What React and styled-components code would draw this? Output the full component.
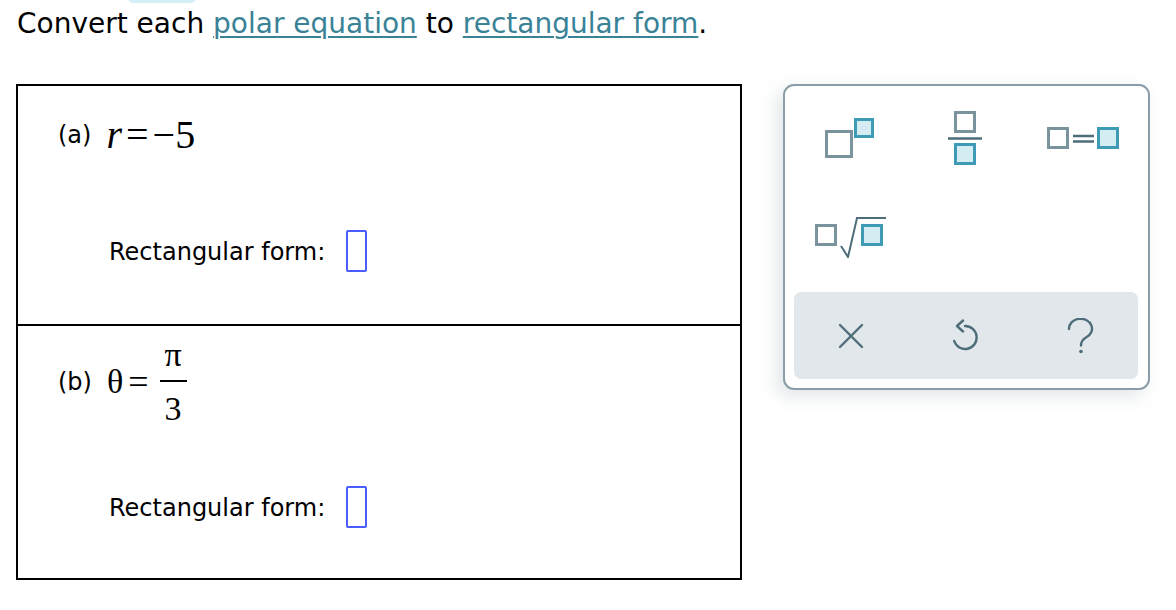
import React from "react";
import styled, { createGlobalStyle } from "styled-components";

const GlobalStyle = createGlobalStyle`
  html, body {
    margin: 0;
    padding: 0;
    background: #ffffff;
  }
  body {
    font-family: "DejaVu Sans", Verdana, sans-serif;
    color: #000000;
  }
`;

const Page = styled.div`
  position: relative;
  width: 1176px;
  height: 610px;
  padding: 6px 0 0 16px;
  box-sizing: border-box;
  overflow: hidden;
`;

const TooltipTail = styled.div`
  position: absolute;
  top: -8px;
  left: 128px;
  width: 68px;
  height: 11px;
  border-radius: 6px;
  background: #d6eef5;
`;

const Title = styled.p`
  margin: 0 0 0 1px;
  font-size: 28px;
  line-height: 36px;
`;

const TermLink = styled.a`
  color: #3a8397;
  text-decoration: underline;
  text-underline-offset: 3px;
  text-decoration-thickness: 2px;
`;

const Content = styled.div`
  display: flex;
  align-items: flex-start;
  gap: 41px;
  margin-top: 42px;
`;

const QuestionTable = styled.div`
  width: 726px;
  border: 2px solid #000000;
  box-sizing: border-box;
`;

const Row = styled.div`
  padding: ${(props) => props.padding || "30px 0 52px 40px"};
  & + & {
    border-top: 2px solid #000000;
  }
`;

const Prompt = styled.div`
  display: flex;
  align-items: center;
  height: ${(props) => props.height || "38px"};
`;

const Label = styled.span`
  font-size: 24px;
  margin-right: 15px;
`;

const MathText = styled.span`
  font-family: "Liberation Serif", "Times New Roman", serif;
  font-size: ${(props) => props.size || "40px"};
  font-style: ${(props) => (props.italic ? "italic" : "normal")};
  line-height: 1;
`;

const Rel = styled.span`
  font-family: "Liberation Serif", "Times New Roman", serif;
  font-size: ${(props) => props.size || "40px"};
  line-height: 1;
  margin: 0 ${(props) => props.space || "4px"};
`;

const Fraction = styled.span`
  display: inline-flex;
  flex-direction: column;
  align-items: center;
  font-family: "Liberation Serif", "Times New Roman", serif;
  font-size: 34px;
  line-height: 1;
  margin-left: 6px;
`;

const FracBar = styled.span`
  width: 27px;
  height: 2px;
  margin: 8px 0 10px;
  background: #000000;
`;

const Answer = styled.div`
  display: flex;
  align-items: center;
  gap: 21px;
  margin-top: ${(props) => props.gap || "76px"};
  padding-left: 51px;
  height: 42px;
`;

const AnswerLabel = styled.span`
  font-size: 24px;
  padding-top: 2px;
`;

const AnswerBox = styled.span`
  display: inline-block;
  width: 21px;
  height: 42px;
  border: 2px solid #4b5dff;
  border-radius: 2px;
  box-sizing: border-box;
`;

const Keypad = styled.div`
  width: 367px;
  border: 2px solid #8a9ea7;
  border-radius: 11px;
  box-sizing: border-box;
  padding: 4px 10px 9px 9px;
  box-shadow: -6px 6px 18px rgba(120, 140, 150, 0.22);
  background: #ffffff;
`;

const KeyGrid = styled.div`
  display: grid;
  grid-template-columns: repeat(3, 1fr);
  grid-auto-rows: 98px;
`;

const Key = styled.button`
  display: flex;
  align-items: center;
  justify-content: center;
  border: none;
  background: transparent;
  padding: 0;
  margin: 0;
  cursor: pointer;
  transform: translateX(${(props) => props.shift || "0px"});
`;

const ActionBar = styled.div`
  display: grid;
  grid-template-columns: repeat(3, 1fr);
  height: 87px;
  margin-top: 6px;
  background: #e1e7ea;
  border-radius: 7px;
`;

const gray = "#7b939c";
const blue = "#3f9bb5";
const blueFill = "#d4edf2";
const dark = "#4e6d7a";

const PowerIcon = () => (
  <svg width="52" height="42" viewBox="0 0 52 42">
    <rect x="1.5" y="13.5" width="25" height="25" fill="none" stroke={gray} strokeWidth="3" />
    <rect x="30.5" y="1.5" width="17" height="17" fill={blueFill} stroke={blue} strokeWidth="3" />
  </svg>
);

const FractionIcon = () => (
  <svg width="36" height="56" viewBox="0 0 36 56">
    <rect x="7.5" y="1.5" width="19" height="19" fill="none" stroke={gray} strokeWidth="3" />
    <line x1="0" y1="27.5" x2="34" y2="27.5" stroke={dark} strokeWidth="2.5" />
    <rect x="7.5" y="33.5" width="19" height="19" fill={blueFill} stroke={blue} strokeWidth="3" />
  </svg>
);

const EqualsIcon = () => (
  <svg width="74" height="24" viewBox="0 0 74 24">
    <rect x="1.5" y="1.5" width="19" height="19" fill="none" stroke={gray} strokeWidth="3" />
    <line x1="26" y1="9" x2="47" y2="9" stroke={dark} strokeWidth="2.5" />
    <line x1="26" y1="14.5" x2="47" y2="14.5" stroke={dark} strokeWidth="2.5" />
    <rect x="51.5" y="1.5" width="19" height="19" fill={blueFill} stroke={blue} strokeWidth="3" />
  </svg>
);

const RootIcon = () => (
  <svg width="72" height="42" viewBox="0 0 72 42">
    <rect x="1.5" y="9.5" width="19" height="19" fill="none" stroke={gray} strokeWidth="3" />
    <polyline points="26,30 33,41 42,2 71,2" fill="none" stroke={dark} strokeWidth="2" />
    <rect x="47.5" y="9.5" width="19" height="19" fill={blueFill} stroke={blue} strokeWidth="3" />
  </svg>
);

const ClearIcon = () => (
  <svg width="26" height="26" viewBox="0 0 26 26">
    <path d="M2 2 L24 24 M24 2 L2 24" stroke={dark} strokeWidth="2.4" strokeLinecap="round" />
  </svg>
);

const UndoIcon = () => (
  <svg width="28" height="34" viewBox="0 0 28 34">
    <path
      d="M13 7 A11.5 11.5 0 1 1 2.2 22"
      fill="none"
      stroke={dark}
      strokeWidth="2.4"
      strokeLinecap="round"
    />
    <path d="M11 1.5 L5 7 L11 12.5" fill="none" stroke={dark} strokeWidth="2.4" strokeLinecap="round" strokeLinejoin="round" />
  </svg>
);

const HelpIcon = () => (
  <svg width="28" height="36" viewBox="0 0 28 36">
    <path
      d="M2 11 A11.5 10 0 1 1 19 19.5 C15.5 21.5 14 23.5 14 27.5"
      fill="none"
      stroke={dark}
      strokeWidth="2.4"
      strokeLinecap="round"
    />
    <circle cx="14" cy="33.5" r="1.8" fill={dark} />
  </svg>
);

const App = () => {
  return (
    <Page>
      <GlobalStyle />
      <TooltipTail />
      <Title>
        Convert each <TermLink>polar equation</TermLink> to{" "}
        <TermLink>rectangular form</TermLink>.
      </Title>
      <Content>
        <QuestionTable>
          <Row>
            <Prompt>
              <Label>(a)</Label>
              <MathText italic>r</MathText>
              <Rel>=</Rel>
              <MathText>−5</MathText>
            </Prompt>
            <Answer>
              <AnswerLabel>Rectangular form:</AnswerLabel>
              <AnswerBox />
            </Answer>
          </Row>
          <Row padding="14px 0 50px 40px">
            <Prompt height="84px">
              <Label>(b)</Label>
              <MathText size="34px">θ</MathText>
              <Rel size="36px" space="5px">=</Rel>
              <Fraction>
                <span>π</span>
                <FracBar />
                <span>3</span>
              </Fraction>
            </Prompt>
            <Answer gap="62px">
              <AnswerLabel>Rectangular form:</AnswerLabel>
              <AnswerBox />
            </Answer>
          </Row>
        </QuestionTable>
        <Keypad>
          <KeyGrid>
            <Key>
              <PowerIcon />
            </Key>
            <Key>
              <FractionIcon />
            </Key>
            <Key shift="3px">
              <EqualsIcon />
            </Key>
            <Key>
              <RootIcon />
            </Key>
          </KeyGrid>
          <ActionBar>
            <Key>
              <ClearIcon />
            </Key>
            <Key>
              <UndoIcon />
            </Key>
            <Key>
              <HelpIcon />
            </Key>
          </ActionBar>
        </Keypad>
      </Content>
    </Page>
  );
};

export default App;
